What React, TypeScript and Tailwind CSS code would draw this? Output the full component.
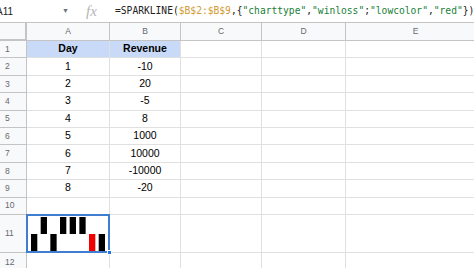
import React from "react";

const rows: [string, string][] = [
  ["1", "-10"],
  ["2", "20"],
  ["3", "-5"],
  ["4", "8"],
  ["5", "1000"],
  ["6", "10000"],
  ["7", "-10000"],
  ["8", "-20"],
];

const values = [-10, 20, -5, 8, 1000, 10000, -10000, -20];

const cell = "border-r border-b border-[#e0e0e0] flex items-center justify-center";
const rowHead =
  "border-r border-b border-[#c4c4c4] bg-[#f8f9fa] flex items-center pl-[5px] text-[8.5px] text-[#666a6f]";
const colHead =
  "border-r border-b border-[#c4c4c4] bg-[#f8f9fa] flex items-center justify-center text-[8.5px] text-[#666a6f]";

function Sparkline() {
  const min = Math.min(...values);
  return (
    <svg width="82" height="37" viewBox="0 0 82 37" className="block">
      {values.map((v, i) => (
        <rect
          key={i}
          x={4 + i * 9.67}
          y={v > 0 ? 2 : 19}
          width={6.3}
          height={17}
          fill={v === min ? "#f00000" : "#000000"}
        />
      ))}
    </svg>
  );
}

function EmptyCells({ n }: { n: number }) {
  return (
    <>
      {Array.from({ length: n }).map((_, i) => (
        <div key={i} className={cell} />
      ))}
    </>
  );
}

function FormulaBar() {
  return (
    <div className="h-[23px] flex items-center bg-white border-b border-[#c4c4c4] overflow-hidden">
      <div className="w-[76px] shrink-0 flex items-center justify-between pr-[7px]">
        <span className="-ml-[4px] text-[10px] text-[#222]">A11</span>
        <span className="text-[7px] text-[#6f7378]">▼</span>
      </div>
      <div className="w-px h-[14px] bg-[#dadce0]" />
      <div className="w-[31px] shrink-0 flex items-center justify-center">
        <span className="italic text-[15px] text-[#b5b5b5] [font-family:'Liberation_Serif',serif]">
          fx
        </span>
      </div>
      <div className="w-px h-[14px] bg-[#dadce0]" />
      <div className="pl-[8px] whitespace-nowrap text-[9.65px] text-[#222] [font-family:'DejaVu_Sans_Mono',monospace]">
        =SPARKLINE(<span className="text-[#d39b32]">$B$2:$B$9</span>,{"{"}
        <span className="text-[#188038]">"charttype"</span>,
        <span className="text-[#188038]">"winloss"</span>;
        <span className="text-[#188038]">"lowcolor"</span>,
        <span className="text-[#188038]">"red"</span>
        {"})"}
      </div>
    </div>
  );
}

export default function App() {
  return (
    <div className="w-[474px] h-[268px] overflow-hidden bg-white [font-family:'Liberation_Sans',Arial,sans-serif]">
      <FormulaBar />
      <div className="grid grid-cols-[27px_83px_71px_81px_84px_140px] grid-rows-[18px_repeat(10,17.4px)_38px_20px]">
        {/* column headers */}
        <div className="border-r-2 border-b-2 border-[#c4c4c4] bg-[#f8f9fa]" />
        <div className={colHead + " bg-[#e8eaed]"}>A</div>
        <div className={colHead}>B</div>
        <div className={colHead}>C</div>
        <div className={colHead}>D</div>
        <div className={colHead}>E</div>

        {/* row 1 */}
        <div className={rowHead}>1</div>
        <div className={cell + " bg-[#c9daf8] font-bold text-[10.5px] text-black"}>Day</div>
        <div className={cell + " bg-[#c9daf8] font-bold text-[10.5px] text-black"}>Revenue</div>
        <EmptyCells n={3} />

        {rows.map(([day, rev], i) => (
          <React.Fragment key={day}>
            <div className={rowHead}>{i + 2}</div>
            <div className={cell + " text-[10.5px] text-black"}>{day}</div>
            <div className={cell + " text-[10.5px] text-black"}>{rev}</div>
            <EmptyCells n={3} />
          </React.Fragment>
        ))}

        {/* row 10 */}
        <div className={rowHead}>10</div>
        <EmptyCells n={5} />

        {/* row 11 with sparkline */}
        <div className={rowHead + " bg-[#e8eaed]"}>11</div>
        <div className="relative border-r border-b border-[#e0e0e0]">
          <Sparkline />
          <div className="absolute -left-px -top-px -right-px -bottom-px border-2 border-[#3f7dd0]" />
          <div className="absolute -right-[3px] -bottom-[3px] w-[5px] h-[5px] bg-[#1a73e8] border border-white" />
        </div>
        <EmptyCells n={4} />

        {/* row 12 */}
        <div className={rowHead}>12</div>
        <EmptyCells n={5} />
      </div>
    </div>
  );
}
